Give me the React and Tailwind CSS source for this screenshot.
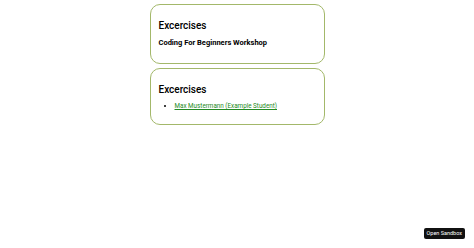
import React from 'react';

const Card = ({ children, className = '' }) => (
    <div className={`border border-[#a3b86a] rounded-[10px] px-[8px] ${className}`}>
        {children}
    </div>
);

const App = () => {
    return (
        <div className="relative w-[474px] h-[248px] bg-white overflow-hidden" style={{ fontFamily: 'Roboto, "Liberation Sans", sans-serif' }}>
            <div className="w-[175px] mx-auto pt-[4px] flex flex-col gap-[4px]">
                {/* Workshop card */}
                <Card className="pt-[14px] pb-[14px]">
                    <h2 className="text-[10px] leading-[14px] font-medium text-black">Excercises</h2>
                    <p className="mt-[4px] text-[7.5px] leading-[12px] font-bold text-black">Coding For Beginners Workshop</p>
                </Card>

                {/* Students card */}
                <Card className="pt-[14px] pb-[12px]">
                    <h2 className="text-[10px] leading-[14px] font-medium text-black">Excercises</h2>
                    <ul className="mt-[3px] list-disc pl-[16px] text-[6.3px] leading-[12px]">
                        <li className="marker:text-black">
                            <a href="#" className="text-[#238a23] underline">Max Mustermann (Example Student)</a>
                        </li>
                    </ul>
                </Card>
            </div>

            <button className="absolute right-[9px] bottom-[9px] bg-[#111] text-white text-[5.5px] leading-[11px] px-[3px] rounded-[2px]">
                Open Sandbox
            </button>
        </div>
    );
};

export default App;
